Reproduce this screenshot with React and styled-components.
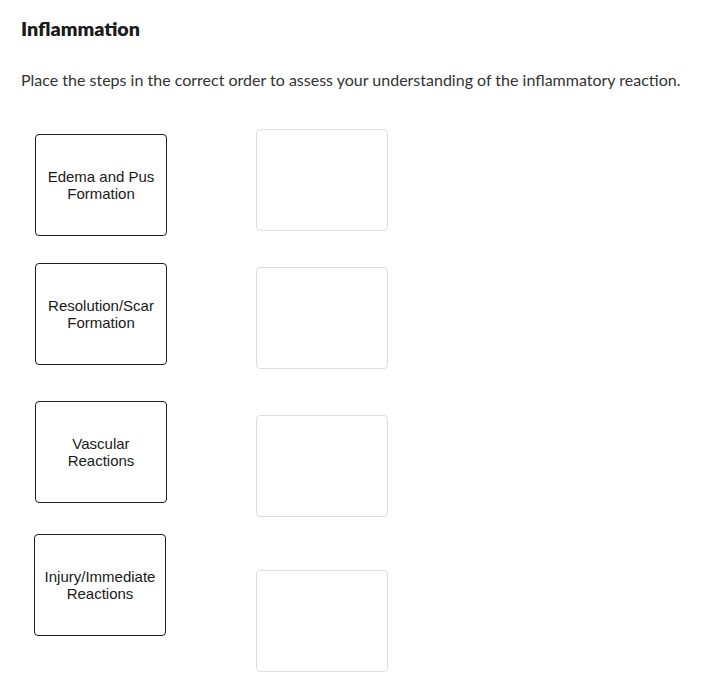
import React from 'react';
import styled, { createGlobalStyle } from 'styled-components';

const GlobalStyle = createGlobalStyle`
  body {
    margin: 0;
    background: #fff;
  }
`;

const Page = styled.div`
  padding: 17px 21px 0;
  width: 712px;
  height: 682px;
  box-sizing: border-box;
  overflow: hidden;
`;

const Title = styled.h1`
  margin: 0;
  font-family: 'Lato', sans-serif;
  font-weight: 800;
  font-size: 19.7px;
  line-height: 24px;
  color: #1b1b1b;
`;

const Prompt = styled.p`
  margin: 29px 0 0;
  font-family: 'Lato', sans-serif;
  font-size: 16px;
  line-height: 20px;
  color: #333;
`;

const Board = styled.div`
  display: flex;
  margin-top: 39px;
  padding-left: 14px;
`;

const Column = styled.div`
  display: flex;
  flex-direction: column;
  width: 132px;

  & + & {
    margin-left: 89px;
  }
`;

const Card = styled.div`
  box-sizing: border-box;
  width: 132px;
  height: 102px;
  margin-top: ${(p) => p.$gap}px;
  margin-left: ${(p) => p.$shift || 0}px;
  border: 1px solid #1e1e1e;
  border-radius: 4px;
  display: flex;
  align-items: center;
  justify-content: center;
  padding: 0 4px;
  text-align: center;
  font-family: 'Liberation Sans', Arial, sans-serif;
  font-size: 15px;
  line-height: 17px;
  color: #1a1a1a;
  background: #fff;
`;

const Slot = styled.div`
  box-sizing: border-box;
  width: 132px;
  height: 102px;
  margin-top: ${(p) => p.$gap}px;
  border: 1px solid #dedede;
  border-radius: 4px;
`;

const cards = [
  { label: ['Edema and Pus', 'Formation'], gap: 5 },
  { label: ['Resolution/Scar', 'Formation'], gap: 27 },
  { label: ['Vascular', 'Reactions'], gap: 36 },
  { label: ['Injury/Immediate', 'Reactions'], gap: 31, shift: -1 },
];

const slots = [0, 36, 46, 53];

const App = () => (
  <Page>
    <GlobalStyle />
    <Title>Inflammation</Title>
    <Prompt>
      Place the steps in the correct order to assess your understanding of the inflammatory reaction.
    </Prompt>
    <Board>
      <Column>
        {cards.map((c) => (
          <Card key={c.label.join(' ')} $gap={c.gap} $shift={c.shift}>
            <span>
              {c.label[0]}
              <br />
              {c.label[1]}
            </span>
          </Card>
        ))}
      </Column>
      <Column>
        {slots.map((g, i) => (
          <Slot key={i} $gap={g} />
        ))}
      </Column>
    </Board>
  </Page>
);

export default App;
